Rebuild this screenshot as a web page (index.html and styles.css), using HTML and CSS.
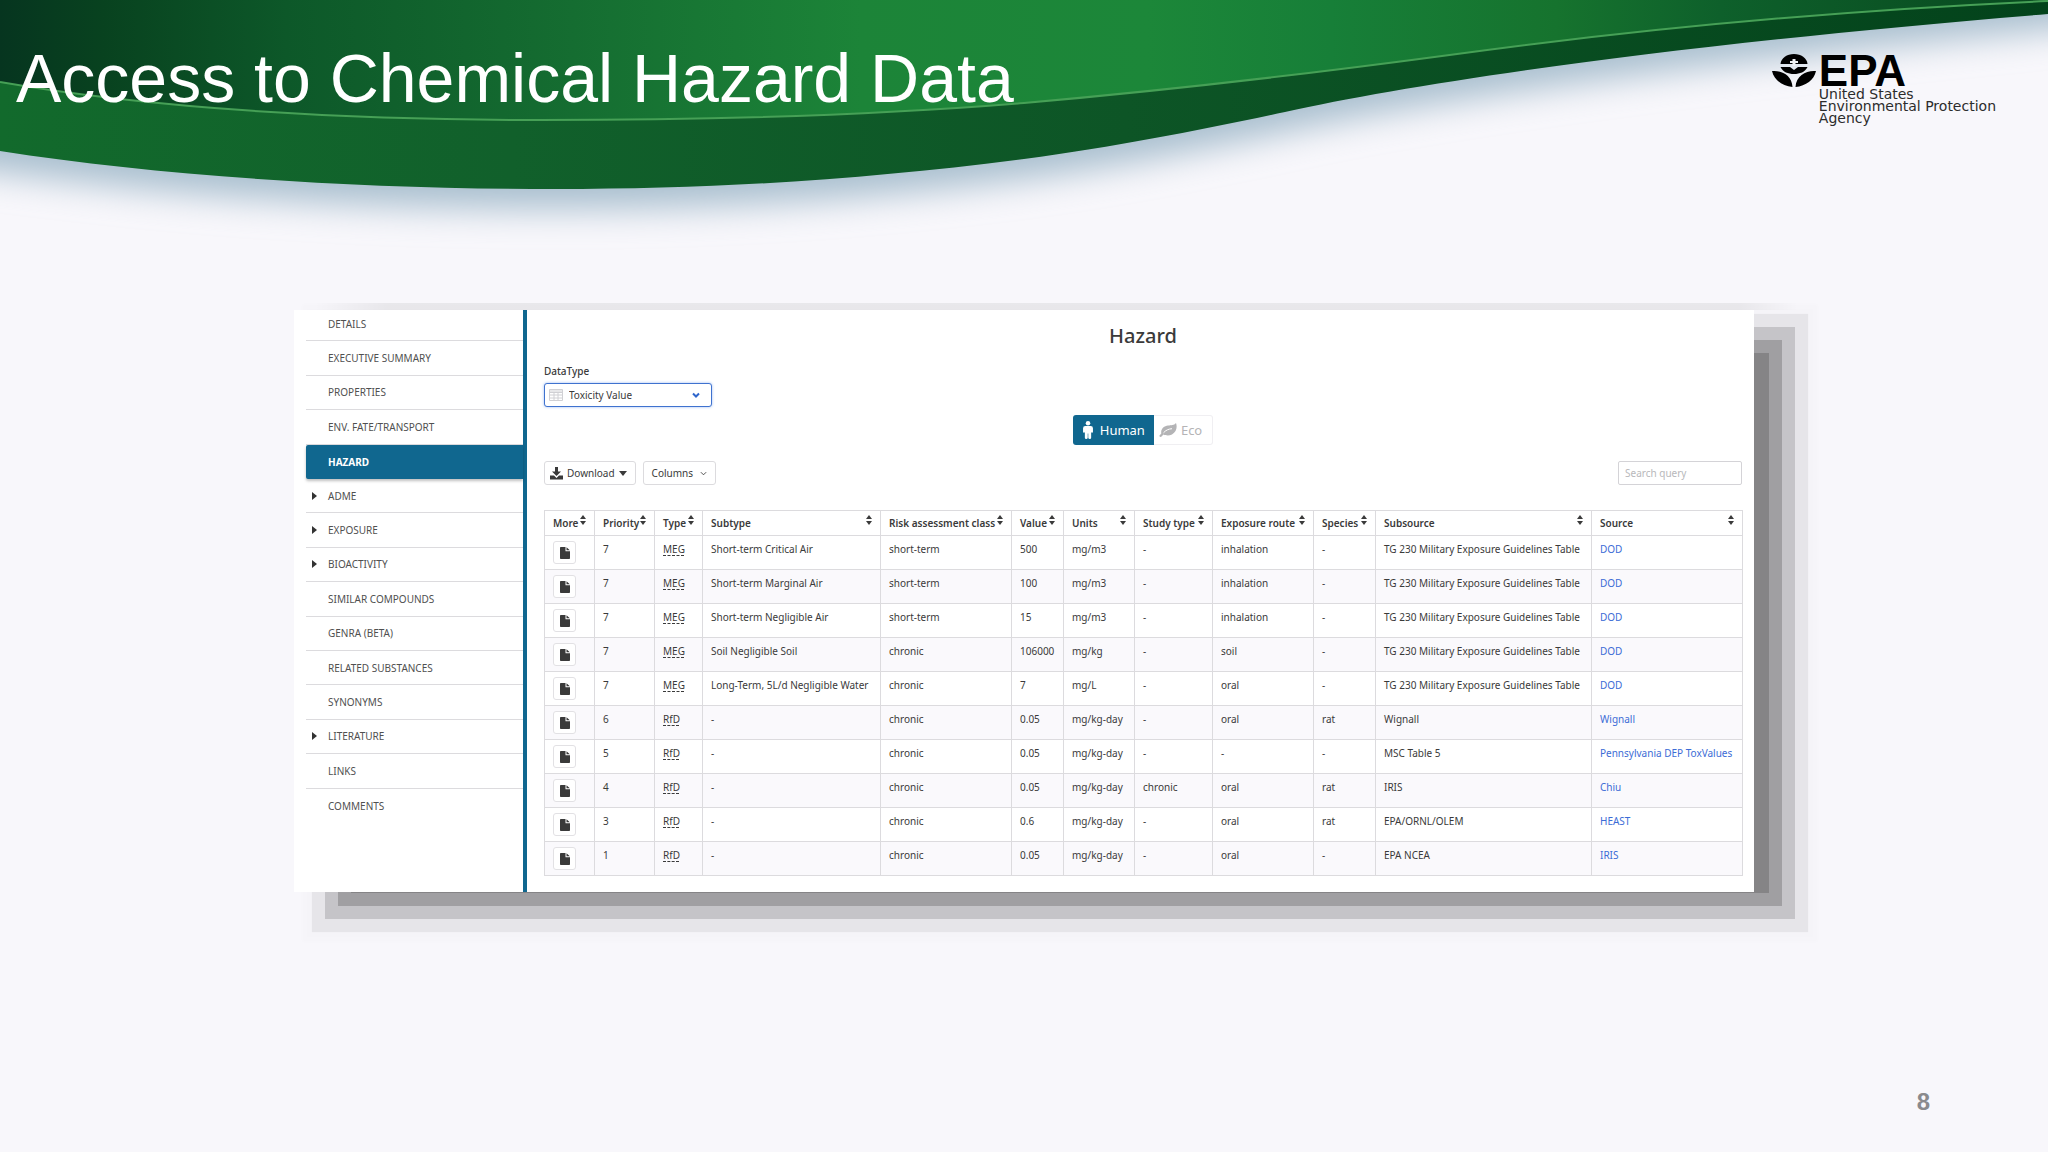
FILE: index.html
```
<!DOCTYPE html>
<html lang="en">
<head>
    <meta charset="UTF-8">
    <title>Access to Chemical Hazard Data</title>
    <link rel="stylesheet" href="styles.css">
</head>
<body>

<!-- shared icons -->
<svg class="sprite" aria-hidden="true">
    <symbol id="sort" viewBox="0 0 6 10">
        <path d="M3 0 L6 4 H0z M0 6 H6 L3 10z"/>
    </symbol>
    <symbol id="file" viewBox="0 0 10 12">
        <path d="M0 .8 Q0 0 .8 0 H5.500 V4.200 H10 V11.200 Q10 12 9.200 12 H.8 Q0 12 0 11.200z M6.500 .2 L9.800 3.300 H6.500z"/>
    </symbol>
    <symbol id="chevron" viewBox="0 0 8 5">
        <path d="M1 1 L4 4 L7 1" fill="none" stroke="currentColor"/>
    </symbol>
</svg>

<header class="banner">
    <svg class="wave" viewBox="0 0 2048 260" preserveAspectRatio="none" aria-hidden="true">
        <defs>
            <linearGradient id="top-green">
                <stop offset="0" stop-color="#06351f"/>
                <stop offset=".05" stop-color="#08421f"/>
                <stop offset=".14" stop-color="#0d5829"/>
                <stop offset=".28" stop-color="#156d31"/>
                <stop offset=".42" stop-color="#1c8438"/>
                <stop offset=".56" stop-color="#1c8739"/>
                <stop offset=".65" stop-color="#177f38"/>
                <stop offset=".76" stop-color="#16732e"/>
                <stop offset=".84" stop-color="#0e602b"/>
                <stop offset="1" stop-color="#08491f"/>
            </linearGradient>
            <linearGradient id="low-green">
                <stop offset="0" stop-color="#126a2c"/>
                <stop offset=".25" stop-color="#11602b"/>
                <stop offset=".55" stop-color="#0d5526"/>
                <stop offset="1" stop-color="#03431b"/>
            </linearGradient>
            <filter id="soft" x="-5%" y="-20%" width="110%" height="160%">
                <feGaussianBlur stdDeviation="17"/>
            </filter>
        </defs>
        <path d="M-60 -40 V164 C160 196 360 209 555 209 C720 209 870 199 1024 179 C1120 166 1200 150 1285 132 C1430 100 1700 62 2108 24 V-40z" fill="#a9bfcf" filter="url(#soft)"/>
        <path d="M0 0 V151 C160 176 360 189 555 189 C720 189 870 179 1024 159 C1120 146 1200 130 1285 112 C1430 80 1700 42 2048 14 V0z" fill="url(#low-green)"/>
        <path d="M0 0 V82 C160 110 360 120 540 120 C720 120 880 115 1024 103 C1160 91 1300 75 1442 56 C1600 34 1800 12 2048 1 V0z" fill="url(#top-green)"/>
        <path d="M0 82 C160 110 360 120 540 120 C720 120 880 115 1024 103 C1160 91 1300 75 1442 56 C1600 34 1800 12 2048 1" fill="none" stroke="#46a056" stroke-width="2"/>
    </svg>
    <h1 class="title">Access to Chemical Hazard Data</h1>
    <div class="logo">
        <svg class="emblem" viewBox="0 0 44 33" aria-hidden="true">
            <path d="M8.500 10 C9 4 15 0 22 0 C29 0 35 4 35.500 10z"/>
            <path d="M8.500 13 H18 L22 16 L26 13 H35.500 C33 18 28 20 22 20 C16 20 11 18 8.500 13z"/>
            <path d="M0 17 C9 16 20 21 20.500 33 C10 32 2 26 0 17z M44 17 C35 16 24 21 23.500 33 C34 32 42 26 44 17z"/>
            <path class="petal" d="M20.500 5 H23.500 V7 H26 V9 H23.500 V12 H20.500 V9 H18 V7 H20.500z"/>
        </svg>
        <div>
            <div class="logo-name">EPA</div>
            <div class="logo-text">United States<br>Environmental Protection<br>Agency</div>
        </div>
    </div>
</header>

<section class="panel">
    <nav class="side">
        <ul>
            <li><a href="#">DETAILS</a></li>
            <li><a href="#">EXECUTIVE SUMMARY</a></li>
            <li><a href="#">PROPERTIES</a></li>
            <li><a href="#">ENV. FATE/TRANSPORT</a></li>
            <li class="active"><a href="#">HAZARD</a></li>
            <li class="more"><a href="#">ADME</a></li>
            <li class="more"><a href="#">EXPOSURE</a></li>
            <li class="more"><a href="#">BIOACTIVITY</a></li>
            <li><a href="#">SIMILAR COMPOUNDS</a></li>
            <li><a href="#">GENRA (BETA)</a></li>
            <li><a href="#">RELATED SUBSTANCES</a></li>
            <li><a href="#">SYNONYMS</a></li>
            <li class="more"><a href="#">LITERATURE</a></li>
            <li><a href="#">LINKS</a></li>
            <li><a href="#">COMMENTS</a></li>
        </ul>
    </nav>

    <main class="content">
        <h2>Hazard</h2>

        <label class="field-label" for="datatype">DataType</label>
        <div class="select-box">
            <svg class="grid-icon" viewBox="0 0 14 12" aria-hidden="true">
                <path d="M.5 .5 H13.500 V11.500 H.5z M.5 3.500 H13.500 M.5 6 H13.500 M.5 9 H13.500 M5 3 V11.500 M9 3 V11.500 M.5 2 H13.500"/>
            </svg>
            <select id="datatype">
                <option>Toxicity Value</option>
            </select>
            <svg class="arrow"><use href="#chevron"/></svg>
        </div>

        <div class="toggle">
            <button class="on" type="button">
                <svg width="12" height="18" viewBox="0 0 12 20" aria-hidden="true">
                    <circle cx="6" cy="2.500" r="2.500"/>
                    <path d="M3 5.500 H9 Q11.500 5.500 11.500 8 V12 Q11.500 13 10.500 13 Q9.500 13 9.500 12 V18.500 Q9.500 20 8 20 Q6.500 20 6.300 18.500 V14 H5.700 V18.500 Q5.500 20 4 20 Q2.500 20 2.500 18.500 V12 Q2.500 13 1.500 13 Q.5 13 .5 12 V8 Q.5 5.500 3 5.500z"/>
                </svg>
                Human
            </button>
            <button type="button">
                <svg width="18" height="14" viewBox="0 0 18 14" aria-hidden="true">
                    <path d="M17 0 C18.500 4 17.500 9 13 11.500 C10 13 6.500 12.500 4.500 11.500 L2 14 Q.5 14 .3 12.800 L2.300 10.500 C1.500 6 5 3 9 2.500 C12 2.200 15 2.500 17 0z"/>
                    <path d="M4.500 9.800 C7 7 9.500 6 13 5.700" fill="none" stroke="#fff"/>
                </svg>
                Eco
            </button>
        </div>

        <div class="toolbar">
            <button type="button">
                <svg width="13" height="13" viewBox="0 0 13 13" aria-hidden="true">
                    <path d="M5 0 H8 V4.500 H11 L6.500 9 L2 4.500 H5z M0 8.500 H4 L6.500 11 L9 8.500 H13 V12.500 H0z"/>
                </svg>
                Download
                <svg width="8" height="5" viewBox="0 0 8 5" aria-hidden="true"><path d="M0 0 H8 L4 5z"/></svg>
            </button>
            <button class="columns" type="button">
                Columns
                <svg class="small-arrow"><use href="#chevron"/></svg>
            </button>
            <input type="text" placeholder="Search query" aria-label="Search query">
        </div>

        <table>
            <colgroup>
                <col class="c-more"><col class="c-priority"><col class="c-type"><col class="c-subtype">
                <col class="c-risk"><col class="c-value"><col class="c-units"><col class="c-study">
                <col class="c-route"><col class="c-species"><col class="c-subsource"><col class="c-source">
            </colgroup>
            <thead>
                <tr></tr>
            </thead>
            <tbody></tbody>
        </table>
    </main>
</section>

<footer class="page-number">8</footer>

<script src="table.js"></script>
</body>
</html>
```
FILE: styles.css
```
* {
    box-sizing: border-box;
}
body {
    margin: 0;
    min-height: 100vh;
    display: flex;
    flex-direction: column;
    background-color: #f8f7fb;
    font-family: "Noto Sans", "Open Sans", sans-serif;
    font-size: 10px;
    line-height: 16px;
    color: #3a3a3a;
}
a {
    text-decoration: none;
}
button, input, select {
    font: inherit;
    color: inherit;
}
svg {
    flex: none;
    fill: currentColor;
}
.sprite {
    position: absolute;
    width: 0;
    height: 0;
}

/* banner */
.banner {
    position: relative;
    display: flex;
    justify-content: space-between;
    align-items: flex-start;
    height: 310px;
    padding: 38px 52px 0 16px;
}
.wave {
    position: absolute;
    left: 0;
    top: 0;
    width: 100%;
    height: 260px;
}
.title {
    position: relative;
    margin: 0;
    font: 68px/80px "Liberation Sans", Arial, sans-serif;
    color: #fff;
}
.logo {
    position: relative;
    display: flex;
    gap: 3px;
    padding-top: 16px;
    color: #000;
}
.emblem {
    width: 44px;
    height: 33px;
}
.petal {
    fill: #f0f2f5;
}
.logo-name {
    font: bold 44px/34px "Liberation Sans", Arial, sans-serif;
}
.logo-text {
    font: 14px/12px "DejaVu Sans", sans-serif;
    color: #2c2c2c;
}

/* panel with stepped shadow */
.panel {
    position: relative;
    display: flex;
    margin: 0 294px;
    background-color: #fff;
    box-shadow:
        36px 22px 0 -21px rgba(0,0,0,.17),
        36px 22px 0 -8px rgba(0,0,0,.19),
        36px 22px 0 5px rgba(0,0,0,.14),
        36px 22px 1px 18px rgba(0,0,0,.06),
        36px 22px 4px 28px rgba(0,0,0,.01);
}
/* thin strip of shadow over the top edge */
.panel::before {
    content: "";
    position: absolute;
    left: 20px;
    right: -44px;
    bottom: 100%;
    height: 7px;
    background: linear-gradient(to right, transparent, rgba(0,0,0,.06) 5%, rgba(0,0,0,.06) 96%, transparent);
}

/* side menu */
.side {
    display: flex;
    flex: none;
    width: 233px;
    padding: 0 0 69px 12px;
    border-right: 4px solid #10678f;
}
.side ul {
    flex: 1;
    display: grid;
    grid-auto-rows: 1fr;
    margin: -3px 0 0;
    padding: 0;
    list-style-type: none;
}
.side li {
    display: flex;
    border-bottom: 1px solid #dcdbde;
}
.side li:last-child {
    border-bottom: none;
}
.side a {
    display: flex;
    align-items: center;
    flex: 1;
    padding-left: 6px;
    color: #505050;
}
.side a::before {
    content: "";
    width: 16px;
}
.side .more a::before {
    width: 0;
    margin-right: 11px;
    border: 4px solid transparent;
    border-left: 5px solid #333;
    border-right: none;
}
.side .active {
    background-color: #10678f;
    border-radius: 2px 0 0 2px;
    border-bottom: none;
    box-shadow: 0 2px 3px rgba(0,0,0,.25);
}
.side .active a {
    color: #fff;
    font-weight: bold;
}

/* main part */
.content {
    flex: 1;
    min-width: 0;
    padding: 12px 12px 16px 17px;
}
.content h2 {
    margin: 0 0 13px;
    font-size: 20px;
    line-height: 28px;
    font-weight: 500;
    text-align: center;
}
.field-label {
    display: block;
    margin-bottom: 4px;
    font-weight: 500;
}
.select-box {
    position: relative;
    width: 168px;
    margin-bottom: 8px;
}
.select-box select {
    display: block;
    appearance: none;
    width: 100%;
    height: 24px;
    padding: 0 24px;
    border: 1px solid #3f72cf;
    border-radius: 3px;
    background-color: #fff;
    box-shadow: 0 0 3px #9dbcf2;
}
.grid-icon {
    position: absolute;
    left: 5px;
    top: 6px;
    width: 14px;
    height: 12px;
    fill: none;
    stroke: #d0d0d4;
}
.arrow {
    position: absolute;
    right: 12px;
    top: 9px;
    width: 8px;
    height: 6px;
    color: #2f66cc;
    stroke-width: 2;
}
.small-arrow {
    width: 7px;
    height: 5px;
}
.toggle {
    display: flex;
    justify-content: center;
    margin-bottom: 16px;
}
.toggle button {
    display: flex;
    align-items: center;
    gap: 4px;
    height: 30px;
    padding: 0 10px 0 5px;
    border: 1px solid #f0eff2;
    border-left: none;
    border-radius: 0 3px 3px 0;
    background-color: #fff;
    color: #b4b4b6;
    font-size: 13px;
}
.toggle .on {
    gap: 6px;
    padding: 0 9px;
    border: none;
    border-radius: 3px 0 0 3px;
    background-color: #10678f;
    color: #fff;
}
.toolbar {
    display: flex;
    gap: 7px;
    margin-bottom: 25px;
}
.toolbar button {
    display: flex;
    align-items: center;
    gap: 4px;
    height: 24px;
    padding: 0 8px 0 5px;
    border: 1px solid #dcdbde;
    border-radius: 3px;
    background-color: #fff;
}
.toolbar .columns {
    gap: 7px;
    padding: 0 8px;
}
.toolbar input {
    width: 124px;
    height: 24px;
    margin-left: auto;
    padding: 0 6px;
    border: 1px solid #d4d3d7;
    border-radius: 2px;
}
.toolbar input::placeholder {
    color: #b8b8bb;
}

/* data table */
table {
    width: 100%;
    table-layout: fixed;
    border-collapse: collapse;
}
.c-more { width: 50px; }
.c-priority { width: 60px; }
.c-type { width: 48px; }
.c-subtype { width: 178px; }
.c-risk { width: 131px; }
.c-value { width: 52px; }
.c-units { width: 71px; }
.c-study { width: 78px; }
.c-route { width: 101px; }
.c-species { width: 62px; }
.c-subsource { width: 216px; }
.c-source { width: 151px; }
th, td {
    padding: 5px 8px;
    border: 1px solid #dcdbde;
    text-align: left;
    vertical-align: top;
    white-space: nowrap;
}
th {
    height: 25px;
    padding: 4px 8px;
}
td {
    height: 34px;
}
tbody tr:nth-child(even) {
    background-color: #faf9fc;
}
.sort {
    display: flex;
    justify-content: space-between;
    width: 100%;
    padding: 0;
    border: none;
    background: none;
    font-weight: 600;
}
.sort svg {
    width: 6px;
    height: 10px;
}
.file {
    display: flex;
    align-items: center;
    justify-content: center;
    width: 23px;
    height: 23px;
    padding: 0;
    border: 1px solid #e2e1e4;
    border-radius: 3px;
    background-color: #fff;
}
.file svg {
    width: 10px;
    height: 12px;
}
td abbr {
    text-decoration: underline dashed;
    text-underline-offset: 2px;
}
td a {
    color: #3c6cd6;
}

.page-number {
    margin-top: auto;
    padding: 0 118px 32px 0;
    font: bold 24px/36px "Liberation Sans", Arial, sans-serif;
    color: #8a8a8d;
    text-align: right;
}
```
FILE: table.js
```
let heads = ['More', 'Priority', 'Type', 'Subtype', 'Risk assessment class', 'Value', 'Units',
        'Study type', 'Exposure route', 'Species', 'Subsource', 'Source'],
    tg = 'TG 230 Military Exposure Guidelines Table',
    rows = [
        ['7', 'MEG', 'Short-term Critical Air', 'short-term', '500', 'mg/m3', '-', 'inhalation', '-', tg, 'DOD'],
        ['7', 'MEG', 'Short-term Marginal Air', 'short-term', '100', 'mg/m3', '-', 'inhalation', '-', tg, 'DOD'],
        ['7', 'MEG', 'Short-term Negligible Air', 'short-term', '15', 'mg/m3', '-', 'inhalation', '-', tg, 'DOD'],
        ['7', 'MEG', 'Soil Negligible Soil', 'chronic', '106000', 'mg/kg', '-', 'soil', '-', tg, 'DOD'],
        ['7', 'MEG', 'Long-Term, 5L/d Negligible Water', 'chronic', '7', 'mg/L', '-', 'oral', '-', tg, 'DOD'],
        ['6', 'RfD', '-', 'chronic', '0.05', 'mg/kg-day', '-', 'oral', 'rat', 'Wignall', 'Wignall'],
        ['5', 'RfD', '-', 'chronic', '0.05', 'mg/kg-day', '-', '-', '-', 'MSC Table 5', 'Pennsylvania DEP ToxValues'],
        ['4', 'RfD', '-', 'chronic', '0.05', 'mg/kg-day', 'chronic', 'oral', 'rat', 'IRIS', 'Chiu'],
        ['3', 'RfD', '-', 'chronic', '0.6', 'mg/kg-day', '-', 'oral', 'rat', 'EPA/ORNL/OLEM', 'HEAST'],
        ['1', 'RfD', '-', 'chronic', '0.05', 'mg/kg-day', '-', 'oral', '-', 'EPA NCEA', 'IRIS']
    ];

document.querySelector('thead tr').innerHTML = heads.map(function (name) {
    return '<th><button class="sort" type="button">' + name + '<svg><use href="#sort"/></svg></button></th>';
}).join('');

document.querySelector('tbody').innerHTML = rows.map(function (row) {
    let cells = row.map(function (text, i) {
        if (i === 1) text = '<abbr>' + text + '</abbr>';
        if (i === row.length - 1) text = '<a href="#">' + text + '</a>'; // source is always a link
        return '<td>' + text + '</td>';
    });
    return '<tr><td><button class="file" type="button" aria-label="More"><svg><use href="#file"/></svg></button></td>' +
        cells.join('') + '</tr>';
}).join('');
```
